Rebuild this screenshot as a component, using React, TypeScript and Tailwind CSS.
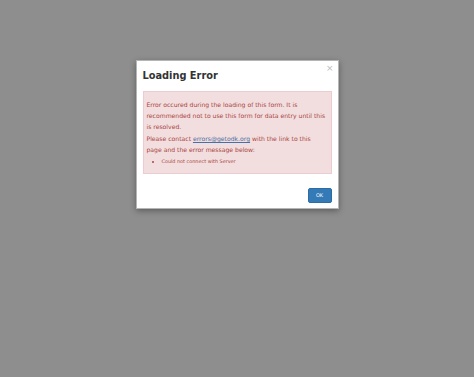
export default function App() {
  return (
    <div
      className="min-h-[377px] w-full bg-[#8e8e8e] flex justify-center pt-[60px]"
      style={{ fontFamily: '"DejaVu Sans", Verdana, sans-serif' }}
    >
      <div className="w-[203px] h-[149px] bg-white border border-[#b5b5b5] shadow-[0_2px_6px_rgba(0,0,0,0.35)] flex flex-col">
        {/* header */}
        <div className="relative px-[6px] pt-[8px] h-[30px]">
          <h2 className="text-[9.8px] leading-[14px] font-bold text-[#333]">Loading Error</h2>
          <span className="absolute right-[4px] top-[2px] text-[9px] leading-[10px] text-[#bbb]">×</span>
        </div>

        {/* body */}
        <div className="px-[6px]">
          <div className="bg-[#f2dede] border border-[#ebccd1] text-[#a94442] text-[6.1px] leading-[11px] px-[3px] pt-[7px] pb-[6px] h-[83px]">
            <p>
              Error occured during the loading of this form. It is recommended not to use this
              form for data entry until this is resolved.
            </p>
            <p className="mt-[2px] leading-[10.5px]">
              Please contact{" "}
              <a className="text-[#4a6fa5] underline">errors@getodk.org</a> with the link to this
              page and the error message below:
            </p>
            <ul className="list-disc pl-[15px] mt-[1px] text-[4.9px] leading-[11px]">
              <li>Could not connect with Server</li>
            </ul>
          </div>
        </div>

        {/* footer */}
        <div className="flex justify-end px-[6px] mt-[14px]">
          <button className="w-[24px] h-[15px] bg-[#337ab7] border border-[#2e6da4] rounded-[2px] text-white text-[5px] leading-none">
            OK
          </button>
        </div>
      </div>
    </div>
  );
}
